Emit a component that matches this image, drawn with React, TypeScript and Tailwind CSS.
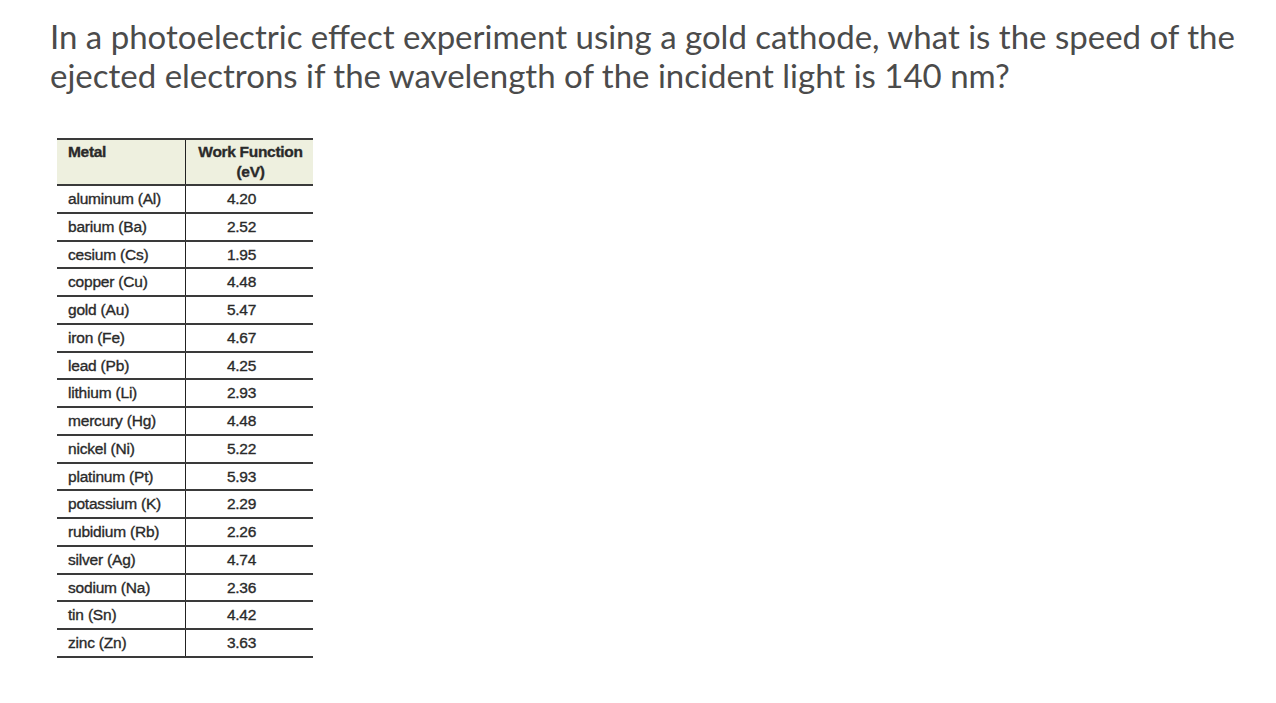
const metals: [string, string][] = [
  ["aluminum (Al)", "4.20"],
  ["barium (Ba)", "2.52"],
  ["cesium (Cs)", "1.95"],
  ["copper (Cu)", "4.48"],
  ["gold (Au)", "5.47"],
  ["iron (Fe)", "4.67"],
  ["lead (Pb)", "4.25"],
  ["lithium (Li)", "2.93"],
  ["mercury (Hg)", "4.48"],
  ["nickel (Ni)", "5.22"],
  ["platinum (Pt)", "5.93"],
  ["potassium (K)", "2.29"],
  ["rubidium (Rb)", "2.26"],
  ["silver (Ag)", "4.74"],
  ["sodium (Na)", "2.36"],
  ["tin (Sn)", "4.42"],
  ["zinc (Zn)", "3.63"],
];

function WorkFunctionTable() {
  return (
    <div className="w-[256px] border-t-2 border-[#3a3a3a] font-['Liberation_Sans',Arial,sans-serif] text-[15.5px] text-[#2a2a2a] [-webkit-text-stroke:0.35px_#2a2a2a]">
      <div className="flex h-[46px] border-b-2 border-[#3a3a3a] bg-[#eef0df] font-bold leading-[20px] tracking-[-0.3px]">
        <div className="w-[129px] border-r-[1.5px] border-[#222] pl-[11px] pt-[2px]">Metal</div>
        <div className="flex-1 pt-[2px] pl-[2px] text-center">
          Work Function
          <br />
          (eV)
        </div>
      </div>
      {metals.map(([name, value]) => (
        <div key={name} className="flex h-[27.75px] items-center border-b-2 border-[#3a3a3a] leading-none">
          <div className="flex h-full w-[129px] items-center border-r-[1.5px] border-[#222] pl-[11px] tracking-[-0.2px]">
            {name}
          </div>
          <div className="pl-[41px] tracking-[-0.3px]">{value}</div>
        </div>
      ))}
    </div>
  );
}

export default function App() {
  return (
    <div className="min-h-screen bg-white pt-[17px]">
      <p className="pl-[50px] pr-[20px] font-['Lato',sans-serif] text-[33px] leading-[38.5px] text-[#4b4b4b]">
        In a photoelectric effect experiment using a gold cathode, what is the speed of the ejected electrons if the
        wavelength of the incident light is 140 nm?
      </p>
      <div className="mt-[44px] pl-[57px]">
        <WorkFunctionTable />
      </div>
    </div>
  );
}
